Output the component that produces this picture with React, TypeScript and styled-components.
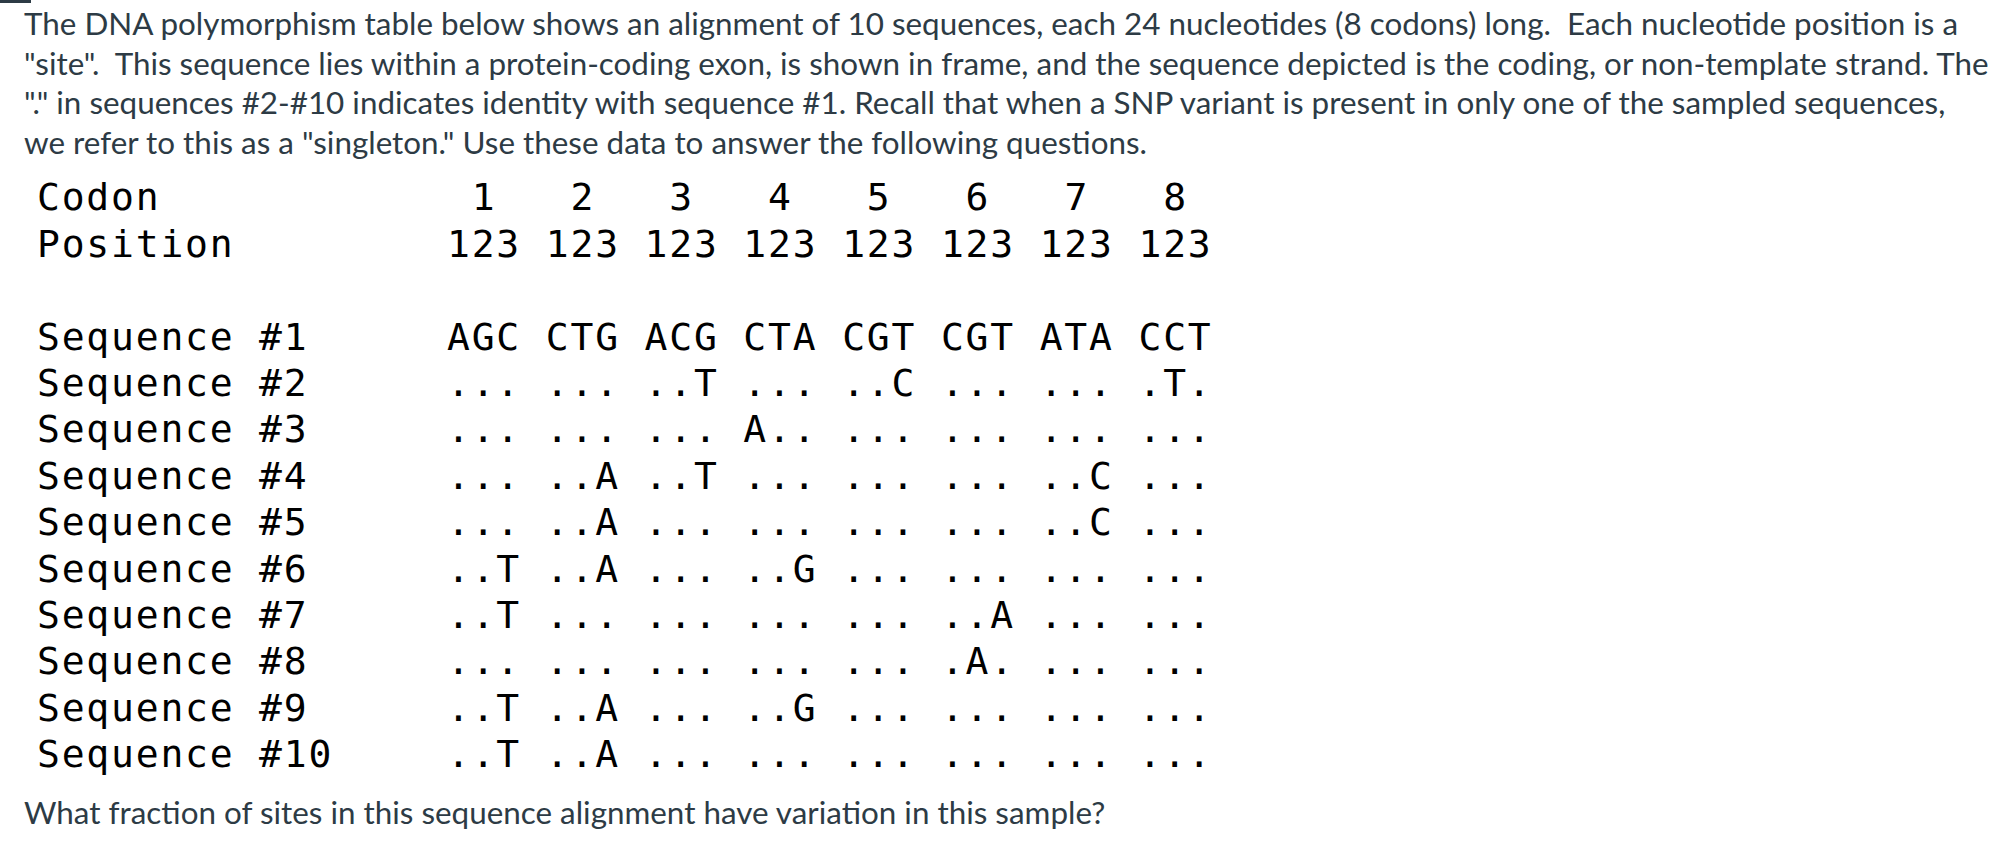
import React from "react";
import styled, { createGlobalStyle } from "styled-components";

// column width of the monospace grid (glyph advance + letter spacing)
const COL = 24.7;

const GlobalStyle = createGlobalStyle`
    html, body {
        margin: 0;
        padding: 0;
        background: #ffffff;
    }
`;

interface ISequenceRow {
    label: string;
    codons: string[];
}

const reference: ISequenceRow = {
    label: "Sequence #1",
    codons: ["AGC", "CTG", "ACG", "CTA", "CGT", "CGT", "ATA", "CCT"],
};

const variants: ISequenceRow[] = [
    { label: "Sequence #2", codons: ["...", "...", "..T", "...", "..C", "...", "...", ".T."] },
    { label: "Sequence #3", codons: ["...", "...", "...", "A..", "...", "...", "...", "..."] },
    { label: "Sequence #4", codons: ["...", "..A", "..T", "...", "...", "...", "..C", "..."] },
    { label: "Sequence #5", codons: ["...", "..A", "...", "...", "...", "...", "..C", "..."] },
    { label: "Sequence #6", codons: ["..T", "..A", "...", "..G", "...", "...", "...", "..."] },
    { label: "Sequence #7", codons: ["..T", "...", "...", "...", "...", "..A", "...", "..."] },
    { label: "Sequence #8", codons: ["...", "...", "...", "...", "...", ".A.", "...", "..."] },
    { label: "Sequence #9", codons: ["..T", "..A", "...", "..G", "...", "...", "...", "..."] },
    { label: "Sequence #10", codons: ["..T", "..A", "...", "...", "...", "...", "...", "..."] },
];

const codonNumbers = ["1", "2", "3", "4", "5", "6", "7", "8"];

const App: React.FunctionComponent = () => {
    return (
        <Page>
            <GlobalStyle />
            <TopTab />
            <Question>
                <Paragraph>
                    The DNA polymorphism table below shows an alignment of 10
                    sequences, each 24 nucleotides (8 codons) long.{"\u00a0 "}Each
                    nucleotide position is a
                    <br />
                    "site".{"\u00a0 "}This sequence lies within a protein-coding
                    exon, is shown in frame, and the sequence depicted is the
                    coding, or non-template strand. The
                    <br />
                    "." in sequences #2-#10 indicates identity with sequence #1.
                    Recall that when a SNP variant is present in only one of the
                    sampled sequences,
                    <br />
                    we refer to this as a "singleton." Use these data to answer
                    the following questions.
                </Paragraph>

                <Alignment>
                    <Row>
                        <RowLabel>Codon</RowLabel>
                        {codonNumbers.map((n) => (
                            <Codon key={n} $centered>
                                {n}
                            </Codon>
                        ))}
                    </Row>
                    <Row>
                        <RowLabel>Position</RowLabel>
                        {codonNumbers.map((n) => (
                            <Codon key={n}>123</Codon>
                        ))}
                    </Row>
                    <Row />
                    {[reference, ...variants].map((seq) => (
                        <Row key={seq.label}>
                            <RowLabel>{seq.label}</RowLabel>
                            {seq.codons.map((c, i) => (
                                <Codon key={i}>{c}</Codon>
                            ))}
                        </Row>
                    ))}
                </Alignment>

                <Paragraph>
                    What fraction of sites in this sequence alignment have
                    variation in this sample?
                </Paragraph>
            </Question>
        </Page>
    );
};

export default App;

// Styled-component

const Page = styled.div`
    position: relative;
    width: 2006px;
    min-height: 842px;
    background: #ffffff;
`;

const TopTab = styled.div`
    position: absolute;
    top: 0;
    left: 0;
    width: 31px;
    height: 3px;
    background: #2d3b45;
`;

const Question = styled.div`
    display: flex;
    flex-direction: column;
    align-items: flex-start;
    padding: 4px 0 0 24px;
    gap: 12px;
`;

const Paragraph = styled.p`
    margin: 0;
    font-family: "Lato", "Liberation Sans", sans-serif;
    font-weight: 400;
    font-size: 31.4px;
    line-height: 39.6px;
    color: #2d3b45;
`;

const Alignment = styled.div`
    display: flex;
    flex-direction: column;
    padding-left: 13px;
    margin-bottom: 4px;
`;

const Row = styled.div`
    display: flex;
    flex-direction: row;
    height: 46.4px;
    font-family: "DejaVu Sans Mono", "Liberation Mono", monospace;
    font-size: 38px;
    line-height: 46.4px;
    letter-spacing: 1.8px;
    color: #000000;
    white-space: pre;
`;

const RowLabel = styled.span`
    width: 410px;
    flex: none;
`;

const Codon = styled.span<{ $centered?: boolean }>`
    width: ${3 * COL}px;
    margin-right: ${COL}px;
    flex: none;
    text-align: ${(p) => (p.$centered ? "center" : "left")};
`;
